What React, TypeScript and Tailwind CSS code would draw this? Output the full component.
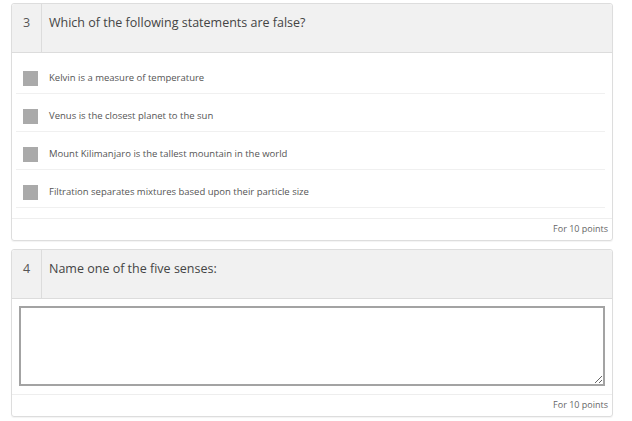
import React from "react";

const options = [
  "Kelvin is a measure of temperature",
  "Venus is the closest planet to the sun",
  "Mount Kilimanjaro is the tallest mountain in the world",
  "Filtration separates mixtures based upon their particle size",
];

function QuestionHeader({ num, text }: { num: number; text: string }) {
  return (
    <div className="flex h-[49px] bg-[#f1f1f1] border-b border-[#dcdcdc] rounded-t-[3px]">
      <div className="w-[30px] shrink-0 border-r border-[#dcdcdc] pt-[10px] text-center text-[12.5px] leading-[18px] text-[#555]">
        {num}
      </div>
      <div className="pl-[7px] pt-[10px] text-[12.5px] leading-[18px] text-[#444]">
        {text}
      </div>
    </div>
  );
}

function Footer() {
  return (
    <div className="h-[22px] border-t border-[#eeeeee] pr-[4px] pb-[2px] flex items-center justify-end text-[9px] text-[#666]">
      For 10 points
    </div>
  );
}

export default function App() {
  return (
    <div
      className="w-[632px] h-[421px] bg-white overflow-hidden pt-[3px] pl-[11px]"
      style={{ fontFamily: '"Open Sans", "Noto Sans", sans-serif' }}
    >
      <div className="w-[602px] border border-[#dddddd] rounded-[3px] shadow-[0_1px_1px_rgba(0,0,0,0.05)]">
        <QuestionHeader num={3} text="Which of the following statements are false?" />
        <div className="pt-[3px] pl-[4px] pr-[7px] pb-[10px]">
          {options.map((opt) => (
            <div
              key={opt}
              className="h-[38px] border-b border-[#f0f0f0] flex items-center pt-[7px] pl-[7px]"
            >
              <span className="w-[15px] h-[15px] bg-[#aaaaaa] shrink-0" />
              <span className="ml-[11px] text-[9.5px] text-[#555]">{opt}</span>
            </div>
          ))}
        </div>
        <Footer />
      </div>

      <div className="mt-[8px] w-[602px] border border-[#dddddd] rounded-[3px] shadow-[0_1px_1px_rgba(0,0,0,0.05)]">
        <QuestionHeader num={4} text="Name one of the five senses:" />
        <div className="px-[7px] pt-[7px] pb-[8px]">
          <textarea className="block w-full h-[80px] border-2 border-[#a3a3a3] bg-white outline-none" />
        </div>
        <Footer />
      </div>
    </div>
  );
}
